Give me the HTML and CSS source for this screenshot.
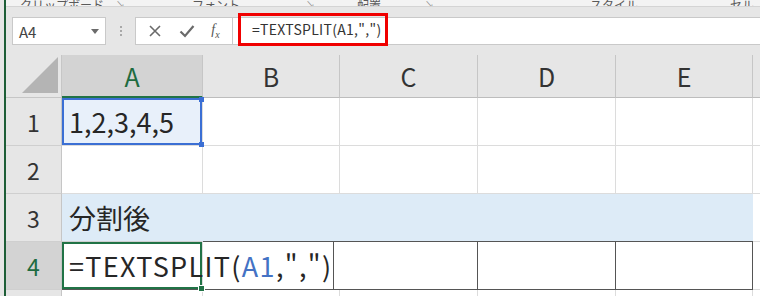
FILE: index.html
```html
<!DOCTYPE html>
<html lang="ja">
<head>
<meta charset="utf-8">
<title>TEXTSPLIT</title>
<link rel="stylesheet" href="styles.css">
</head>
<body>
  <div class="window">
    <div class="ribbon">
      <span class="grp g-clip">クリップボード</span><span class="launch l-clip">↘</span>
      <span class="grp g-font">フォント</span><span class="launch l-font">↘</span>
      <span class="grp g-align">配置</span><span class="launch l-align">↘</span>
      <span class="grp g-style">スタイル</span><span class="tick t-style"></span>
      <span class="grp g-cell">セル</span><span class="tick t-cell"></span>
      <span class="grp g-edit">編集</span>
    </div>

    <div class="fbar">
      <div class="namebox">
        <span>A4</span>
        <svg class="caret" width="8" height="5" viewBox="0 0 8 5"><path d="M0 0h8L4 5z" fill="#6b6b6b"/></svg>
      </div>
      <div class="grip"><i></i><i></i><i></i></div>
      <div class="btns">
        <svg width="14" height="14" viewBox="0 0 14 14"><path d="M2 2l10 10M12 2L2 12" stroke="#6a6a6a" stroke-width="1.6" fill="none"/></svg>
        <svg width="16" height="14" viewBox="0 0 16 14"><path d="M1.5 7.5l4.5 4.5 8.5-10" stroke="#6a6a6a" stroke-width="2.2" fill="none"/></svg>
        <span class="fx">f<sub>x</sub></span>
      </div>
      <div class="input">
        <div class="hl">=TEXTSPLIT(A1,",")</div>
      </div>
    </div>

    <div class="sheet">
      <div class="corner">
        <svg width="38" height="38" viewBox="0 0 38 38"><path d="M0 37L36 1v36z" fill="#b4b4b4"/></svg>
      </div>
      <div class="ch sel">A</div>
      <div class="ch">B</div>
      <div class="ch">C</div>
      <div class="ch">D</div>
      <div class="ch">E</div>
      <div class="ch last"></div>

      <div class="rh">1</div>
      <div class="cell ref">1,2,3,4,5</div>
      <div class="cell"></div>
      <div class="cell"></div>
      <div class="cell"></div>
      <div class="cell"></div>
      <div class="cell last"></div>

      <div class="rh">2</div>
      <div class="cell"></div>
      <div class="cell"></div>
      <div class="cell"></div>
      <div class="cell"></div>
      <div class="cell"></div>
      <div class="cell last"></div>

      <div class="rh">3</div>
      <div class="cell band">分割後</div>
      <div class="cell band"></div>
      <div class="cell band"></div>
      <div class="cell band"></div>
      <div class="cell band"></div>
      <div class="cell last"></div>

      <div class="rh sel">4</div>
      <div class="cell active">=TEXTSPLIT(<span class="blue">A1</span>,",")</div>
      <div class="cell boxed spill"></div>
      <div class="cell boxed after-spill"></div>
      <div class="cell boxed"></div>
      <div class="cell boxed"></div>
      <div class="cell last"></div>

      <div class="rh"></div>
      <div class="cell"></div>
      <div class="cell"></div>
      <div class="cell"></div>
      <div class="cell"></div>
      <div class="cell"></div>
      <div class="cell last"></div>
    </div>
  </div>
</body>
</html>
```

FILE: styles.css
```css
body {
    margin: 0;
    background-color: #e6e6e6;
    font-family: "Noto Sans CJK JP", "Noto Sans", sans-serif;
    color: #262626;
}

.window {
    margin-left: 4px;
    border-left: 2px solid #1d5e37;
    height: 296px;
    overflow: hidden;
    background-color: #e6e6e6;
}

/* ribbon group labels, cut off at the top */
.ribbon {
    height: 6px;
    background-color: #f3f3f3;
    border-bottom: 1px solid #d4d4d4;
    overflow: hidden;
    display: flex;
    align-items: flex-end;
    font-size: 12px;
    color: #5a5a5a;
    white-space: nowrap;
}

.ribbon span {
    line-height: 12px;
    margin-bottom: -5px;
}

.launch {
    font-size: 9px;
    color: #8a8a8a;
}

.tick {
    width: 1px;
    height: 5px;
    background-color: #c4c4c4;
}

.g-clip { margin-left: 14px; }
.l-clip { margin-left: 12px; }
.g-font { margin-left: 67px; }
.l-font { margin-left: 66px; }
.g-align { margin-left: 42px; }
.l-align { margin-left: 44px; }
.g-style { margin-left: 156px; }
.t-style { margin-left: 62px; }
.g-cell { margin-left: 30px; }
.t-cell { margin-left: 30px; }
.g-edit { margin-left: 27px; }

/* formula bar */
.fbar {
    display: flex;
    align-items: flex-start;
    padding: 10px 0 10px 6px;
}

.namebox {
    width: 94px;
    height: 28px;
    box-sizing: border-box;
    background-color: #fff;
    border: 1px solid #c9c9c9;
    display: flex;
    align-items: center;
    justify-content: space-between;
    padding: 0 6px 0 6px;
    font-size: 15px;
    color: #444;
}

.grip {
    width: 29px;
    height: 28px;
    display: flex;
    flex-direction: column;
    align-items: center;
    justify-content: center;
    gap: 2px;
}

.grip i {
    width: 2px;
    height: 2px;
    background-color: #a8a8a8;
}

.btns {
    width: 97px;
    height: 28px;
    box-sizing: border-box;
    background-color: #fff;
    border: 1px solid #c9c9c9;
    border-right: none;
    display: flex;
    align-items: center;
    justify-content: space-around;
    padding: 0 4px 0 4px;
}

.fx {
    font-family: "Liberation Serif", serif;
    font-style: italic;
    font-size: 14px;
    color: #555;
}

.fx sub {
    font-size: 10px;
}

.input {
    flex: 1;
    height: 28px;
    box-sizing: border-box;
    background-color: #fff;
    border: 1px solid #c9c9c9;
    border-right: none;
}

.hl {
    width: 150px;
    height: 33px;
    box-sizing: border-box;
    margin: -5px 0 0 5px;
    border: 3px solid #f00000;
    padding: 0 0 0 11px;
    font-size: 14px;
    line-height: 26px;
    letter-spacing: 0.3px;
    color: #333;
    white-space: nowrap;
}

/* sheet grid */
.sheet {
    display: grid;
    grid-template-columns: 56px 141px 137px 138px 138px 137px 1fr;
    grid-template-rows: 43px 48px 48px 48px 48px 20px;
    background-color: #fff;
}

.corner {
    background-color: #e6e6e6;
    border-right: 1px solid #c6c6c6;
    border-bottom: 1px solid #c6c6c6;
    display: flex;
    align-items: flex-end;
    justify-content: flex-end;
    padding: 0 1px 3px 0;
}

.ch {
    background-color: #e6e6e6;
    border-right: 1px solid #c6c6c6;
    border-bottom: 1px solid #bdbdbd;
    display: flex;
    align-items: center;
    justify-content: center;
    font-size: 25px;
    color: #333;
}

.ch.sel {
    background-color: #d3d3d3;
    color: #1e6b40;
    border-bottom: 2px solid #217346;
}

.rh {
    background-color: #e6e6e6;
    border-right: 1px solid #c6c6c6;
    border-bottom: 1px solid #cfcfcf;
    display: flex;
    align-items: center;
    justify-content: center;
    font-size: 23px;
    color: #333;
}

.rh.sel {
    background-color: #d3d3d3;
    color: #1e6b40;
}

.cell {
    border-right: 1px solid #dcdcdc;
    border-bottom: 1px solid #dcdcdc;
    display: flex;
    align-items: center;
    padding-left: 7px;
    font-size: 27px;
    white-space: nowrap;
}

.ref {
    background-color: #e8f0fa;
    box-shadow: inset 0 0 0 2px #3b6fd4;
    position: relative;
}

.ref::before,
.ref::after {
    content: "";
    position: absolute;
    width: 5px;
    height: 5px;
    background-color: #3b6fd4;
    right: -2px;
}

.ref::before {
    top: -1px;
}

.ref::after {
    bottom: -2px;
}

.band {
    background-color: #ddebf7;
    border-right-color: #ddebf7;
    border-bottom-color: #cfcfcf;
}

.active {
    position: relative;
    z-index: 1;
    overflow: visible;
    box-shadow: inset 0 0 0 2px #217346;
    border-bottom: 1px solid #555;
    letter-spacing: 1.35px;
}

.active::after {
    content: "";
    position: absolute;
    width: 5px;
    height: 5px;
    right: -3px;
    bottom: -3px;
    background-color: #217346;
    border: 1px solid #fff;
}

.blue {
    color: #4472c4;
}

.boxed {
    border-top: 1px solid #555;
    border-right: 1px solid #555;
    border-bottom: 1px solid #555;
    margin-top: -1px;
}

.boxed.spill {
    border-right: none;
}

.boxed.after-spill {
    margin-left: -7px;
    border-left: 1px solid #555;
}
```
